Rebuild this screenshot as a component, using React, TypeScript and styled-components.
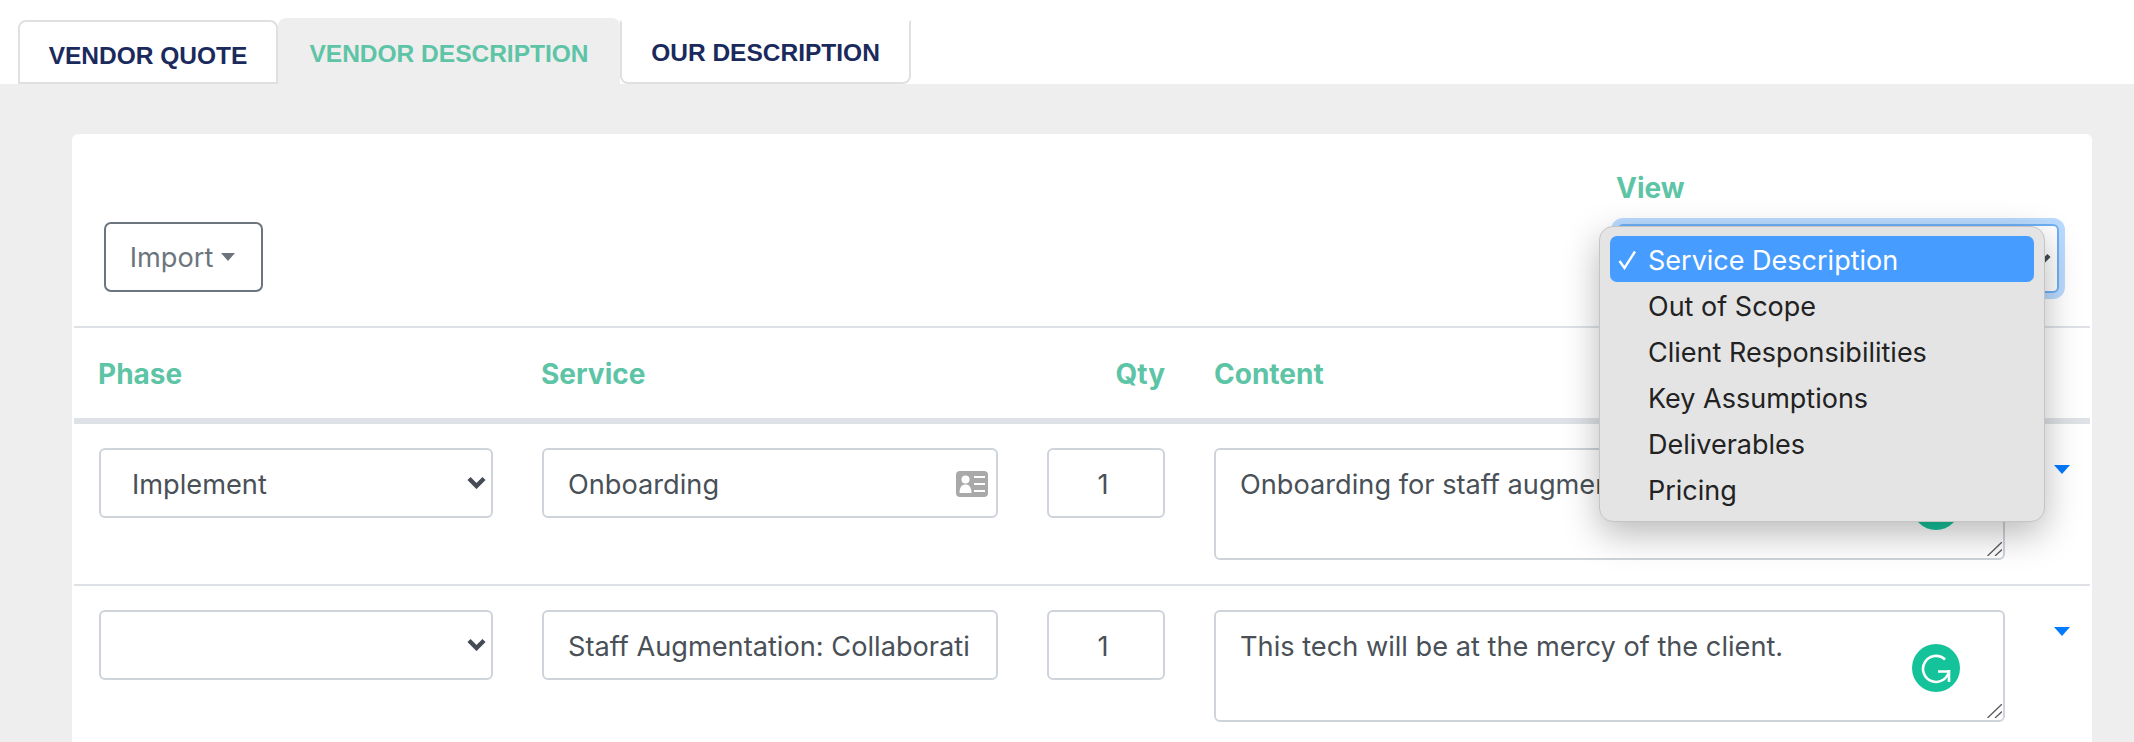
import React from 'react'
import styled, { createGlobalStyle } from 'styled-components'

const GlobalStyle = createGlobalStyle`
  html, body {
    margin: 0;
    padding: 0;
    height: 742px;
    overflow: hidden;
    background: #fff;
    font-family: Inter, "Noto Sans", sans-serif;
  }
  * { box-sizing: border-box; }
`

const viewOptions = ['Service Description', 'Out of Scope', 'Client Responsibilities', 'Key Assumptions', 'Deliverables', 'Pricing']

const rows = [
  { phase: 'Implement', service: 'Onboarding', qty: '1', content: 'Onboarding for staff augmentation.', hasCard: true },
  { phase: '', service: 'Staff Augmentation: Collaboration', qty: '1', content: 'This tech will be at the mercy of the client.', hasCard: false },
]

const App: React.FC = () => {
  return (
    <Page>
      <GlobalStyle />
      <Tabs>
        <Tab>VENDOR QUOTE</Tab>
        <Tab $active>VENDOR DESCRIPTION</Tab>
        <Tab $last>OUR DESCRIPTION</Tab>
      </Tabs>

      <Body>
        <Card>
          <Toolbar>
            <ImportButton type='button'>
              Import
              <ImportCaret />
            </ImportButton>

            <ViewGroup>
              <ViewLabel>View</ViewLabel>
              <ViewSelect>
                <Chevron width='19' height='13' viewBox='0 0 19 13' $right={6} $top={27}>
                  <path d='M2 2.5 L9.5 10 L17 2.5' fill='none' stroke='#454c55' strokeWidth='4.4' />
                </Chevron>
              </ViewSelect>

              <Menu>
                {viewOptions.map((option, i) => (
                  <MenuItem key={option} $selected={i === 0}>
                    {i === 0 && (
                      <Check width='19' height='20' viewBox='0 0 19 20'>
                        <path d='M1.5 11 L6.5 18 L17 1.5' fill='none' stroke='#fff' strokeWidth='2.4' />
                      </Check>
                    )}
                    {option}
                  </MenuItem>
                ))}
              </Menu>
            </ViewGroup>
          </Toolbar>

          <HeaderRow>
            <HeaderCell>Phase</HeaderCell>
            <HeaderCell>Service</HeaderCell>
            <HeaderCell $right>Qty</HeaderCell>
            <HeaderCell>Content</HeaderCell>
          </HeaderRow>

          {rows.map(row => (
            <Row key={row.service}>
              <FieldWrap>
                <Select defaultValue={row.phase}>
                  <option value=''></option>
                  <option value='Implement'>Implement</option>
                </Select>
                <Chevron width='19' height='13' viewBox='0 0 19 13' $right={7} $top={28}>
                  <path d='M2 2.5 L9.5 10 L17 2.5' fill='none' stroke='#454c55' strokeWidth='4.4' />
                </Chevron>
              </FieldWrap>

              <FieldWrap>
                <Input defaultValue={row.service} />
                {row.hasCard && (
                  <CardIcon width='32' height='26' viewBox='0 0 32 26'>
                    <rect width='32' height='26' rx='4' fill='#a9a9a9' />
                    <circle cx='9.5' cy='8.5' r='4' fill='#fff' />
                    <path d='M3.5 22 C3.5 16 6 13.5 9.5 13.5 C13 13.5 15.5 16 15.5 22 Z' fill='#fff' />
                    <path d='M18 6 H29 M18 13 H29 M18 20 H29' stroke='#fff' strokeWidth='2' />
                  </CardIcon>
                )}
              </FieldWrap>

              <QtyInput defaultValue={row.qty} />

              <FieldWrap>
                <TextArea defaultValue={row.content} />
                <GrammarlyBadge width='48' height='48' viewBox='0 0 48 48'>
                  <circle cx='24' cy='24' r='24' fill='#15c39a' />
                  <path d='M33 15.5 A13 13 0 1 0 37 26' fill='none' stroke='#fff' strokeWidth='2.6' />
                  <path d='M26 27.5 H37 V38' fill='none' stroke='#fff' strokeWidth='2.6' />
                </GrammarlyBadge>
                <ResizeGrip width='15' height='14' viewBox='0 0 15 14'>
                  <path d='M0.5 14 L15 0 M8 14 L15 7.5' fill='none' stroke='#5a5a5a' strokeWidth='1.3' />
                </ResizeGrip>
              </FieldWrap>

              <RowCaret />
            </Row>
          ))}
        </Card>
      </Body>
    </Page>
  )
}

export default App

const Page = styled.div`
  width: 2134px;
  height: 742px;
  display: flex;
  flex-direction: column;
  overflow: hidden;
`

const Tabs = styled.div`
  display: flex;
  flex-shrink: 0;
  align-items: flex-end;
  height: 84px;
  padding-left: 18px;
`

const Tab = styled.div<{ $active?: boolean; $last?: boolean }>`
  display: flex;
  align-items: center;
  justify-content: center;
  height: ${p => (p.$active ? '66px' : '64px')};
  width: ${p => (p.$active ? '342px' : p.$last ? '291px' : '260px')};
  padding-top: ${p => (p.$active ? '5px' : p.$last ? '2px' : '8px')};
  background: ${p => (p.$active ? '#eeeeee' : '#fff')};
  border: ${p => (p.$active ? 'none' : '2px solid #e0e0e0')};
  border-top-color: ${p => (p.$last ? '#fff' : '#e0e0e0')};
  border-radius: ${p => (p.$last ? '0 0 8px 8px' : '8px 8px 0 0')};
  color: ${p => (p.$active ? '#5dc4a6' : '#1b2a5c')};
  font-family: "Liberation Sans", Arial, sans-serif;
  font-size: 24.5px;
  font-weight: 700;
  white-space: nowrap;
`

const Body = styled.div`
  flex: 1;
  min-height: 0;
  background: #eeeeee;
  padding: 50px 42px 0 72px;
`

const Card = styled.div`
  width: 2020px;
  background: #fff;
  border-radius: 6px 6px 0 0;
  padding: 0 2px;
`

const Toolbar = styled.div`
  display: flex;
  align-items: flex-end;
  justify-content: space-between;
  height: 194px;
  padding: 0 31px 33px 30px;
  border-bottom: 2px solid #dee2e6;
`

const ImportButton = styled.button`
  display: flex;
  align-items: center;
  justify-content: center;
  gap: 8px;
  width: 159px;
  height: 70px;
  margin-bottom: 1px;
  padding-right: 8px;
  background: #fff;
  border: 2px solid #6c757d;
  border-radius: 7px;
  color: #6c757d;
  font-family: Inter, sans-serif;
  font-size: 27.2px;
`

const ImportCaret = styled.span`
  width: 0;
  height: 0;
  border-left: 7px solid transparent;
  border-right: 7px solid transparent;
  border-top: 8px solid #6c757d;
`

const ViewGroup = styled.div`
  position: relative;
  width: 442px;
`

const ViewLabel = styled.div`
  margin-left: -1px;
  color: #5dc4a6;
  font-size: 28px;
  font-weight: 700;
  line-height: 30px;
  margin-bottom: 21px;
`

const ViewSelect = styled.div`
  position: relative;
  height: 69px;
  background: #fff;
  border: 2px solid #6fb0f7;
  border-radius: 6px;
  box-shadow: 0 0 0 6px rgba(0, 123, 255, 0.27);
`

const Menu = styled.div`
  position: absolute;
  left: -18px;
  top: 53px;
  width: 446px;
  height: 296px;
  padding: 9px 10px;
  background: #e4e4e4;
  border: 1px solid #c4c4c4;
  border-radius: 14px;
  box-shadow: 0 12px 36px rgba(0, 0, 0, 0.28);
  z-index: 5;
`

const MenuItem = styled.div<{ $selected?: boolean }>`
  position: relative;
  height: 46px;
  padding: 2px 0 0 38px;
  display: flex;
  align-items: center;
  border-radius: 7px;
  background: ${p => (p.$selected ? '#469dff' : 'transparent')};
  color: ${p => (p.$selected ? '#fff' : '#222')};
  font-size: 27px;
`

const Check = styled.svg`
  position: absolute;
  left: 8px;
  top: 14px;
`

const HeaderRow = styled.div`
  display: grid;
  grid-template-columns: 394px 456px 119px 790px;
  column-gap: 49px;
  align-items: center;
  height: 96px;
  padding: 1px 0 0 24px;
  border-bottom: 6px solid #dee2e6;
`

const HeaderCell = styled.div<{ $right?: boolean }>`
  color: #5dc4a6;
  font-size: 28px;
  font-weight: 700;
  text-align: ${p => (p.$right ? 'right' : 'left')};
`

const Row = styled.div`
  display: grid;
  grid-template-columns: 394px 456px 118px 791px 16px;
  column-gap: 49px;
  align-items: start;
  padding: 24px 0 24px 25px;
  border-bottom: 2px solid #dee2e6;
`

const FieldWrap = styled.div`
  position: relative;
`

const fieldText = `
  color: #495057;
  font-family: Inter, sans-serif;
  font-size: 27.2px;
  background: #fff;
  border: 2px solid #ced4da;
  border-radius: 6px;
  outline: none;
`

const Select = styled.select`
  ${fieldText}
  display: block;
  appearance: none;
  width: 100%;
  height: 70px;
  padding: 2px 40px 0 31px;
`

const Chevron = styled.svg<{ $right: number; $top: number }>`
  position: absolute;
  right: ${p => p.$right}px;
  top: ${p => p.$top}px;
`

const Input = styled.input`
  ${fieldText}
  display: block;
  width: 100%;
  height: 70px;
  padding: 2px 27px 0 24px;
`

const CardIcon = styled.svg`
  position: absolute;
  right: 10px;
  top: 23px;
`

const QtyInput = styled.input`
  ${fieldText}
  display: block;
  width: 100%;
  height: 70px;
  padding: 2px 18px 0 12px;
  text-align: center;
`

const TextArea = styled.textarea`
  ${fieldText}
  display: block;
  width: 100%;
  height: 112px;
  padding: 17px 24px;
  line-height: 36px;
  resize: none;
`

const GrammarlyBadge = styled.svg`
  position: absolute;
  right: 45px;
  top: 34px;
`

const ResizeGrip = styled.svg`
  position: absolute;
  right: 3px;
  bottom: 4px;
  pointer-events: none;
`

const RowCaret = styled.span`
  width: 0;
  height: 0;
  margin-top: 17px;
  border-left: 8px solid transparent;
  border-right: 8px solid transparent;
  border-top: 9px solid #007bff;
`
